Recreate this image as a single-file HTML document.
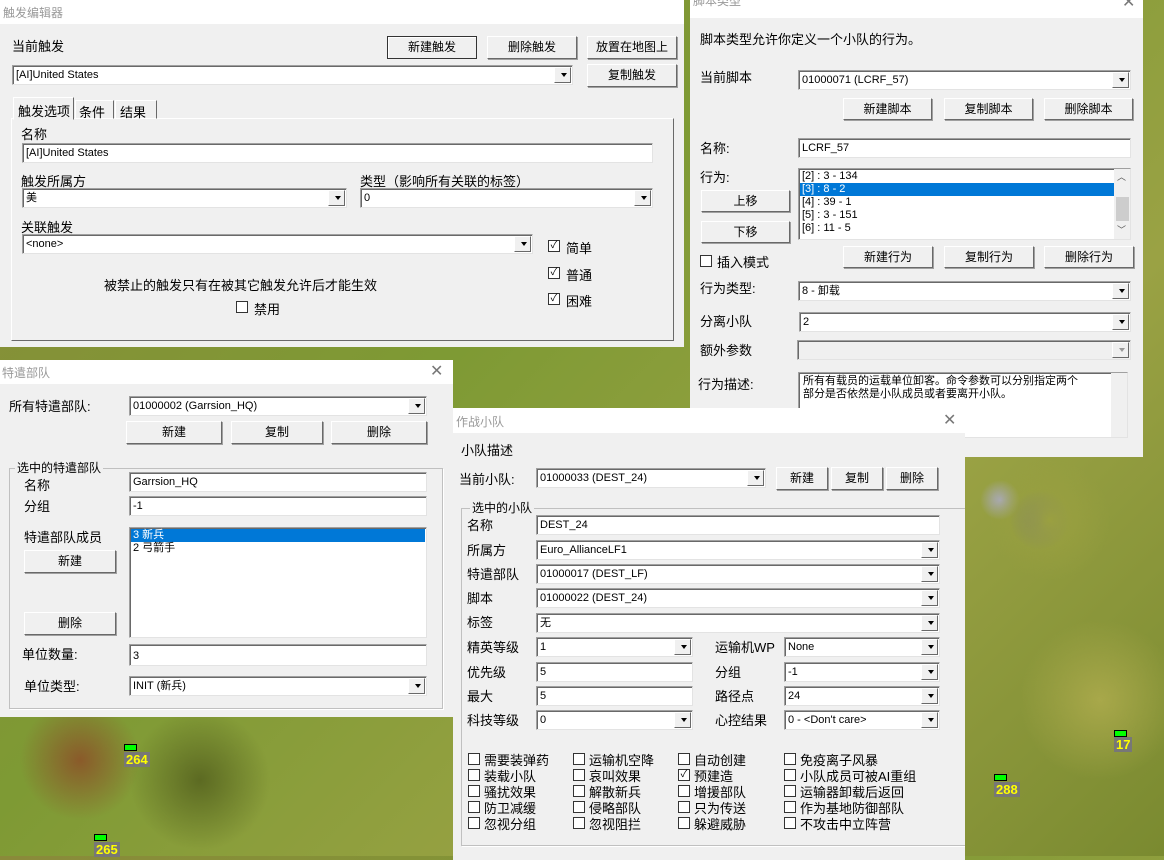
<!DOCTYPE html>
<html><head><meta charset="utf-8">
<style>
*{box-sizing:border-box;margin:0;padding:0}
body{width:1164px;height:856px;overflow:hidden;position:relative;font-family:"Liberation Sans","Noto Sans CJK SC",sans-serif;font-size:12px;color:#000;
background:radial-gradient(circle at 1050px 520px,#9aa040 0,transparent 60px),radial-gradient(circle at 200px 780px,#5c6a22 0,transparent 70px),radial-gradient(circle at 80px 760px,#8a5a2a 0,transparent 60px),radial-gradient(circle at 1100px 700px,#a8a84a 0,transparent 80px),radial-gradient(circle at 1040px 520px,#777 0,transparent 30px),radial-gradient(circle at 1000px 500px,#aab 0,transparent 20px),linear-gradient(135deg,#8a8a3a,#7e9a34 40%,#9aa244 70%,#7a8a30);}
.a{position:absolute;white-space:nowrap}
.win{position:absolute;background:#f0f0f0;overflow:hidden}
.tb{position:absolute;left:0;right:0;top:0;background:#fff}
.tt{color:#999;font-size:12px}
.x{position:absolute;color:#777;font-size:16px;font-weight:300}
.in{position:absolute;background:#fff;border:1px solid;border-color:#a0a0a0 #e3e3e3 #e3e3e3 #a0a0a0;box-shadow:inset 1px 1px 0 #696969;padding:2px 0 0 3px;font-size:11px;line-height:14px;overflow:hidden}
.cb{position:absolute;background:#fff;border:1px solid;border-color:#a0a0a0 #e3e3e3 #e3e3e3 #a0a0a0;box-shadow:inset 1px 1px 0 #696969;padding:2px 0 0 3px;font-size:11px;line-height:14px}
.cb::after{content:"";position:absolute;right:1px;top:1px;bottom:1px;width:15px;background:#f0f0f0;border:1px solid;border-color:#fff #696969 #696969 #fff}
.cb::before{content:"";position:absolute;right:5px;top:50%;margin-top:-2px;border:3.5px solid transparent;border-top:4px solid #000;border-bottom:0;z-index:2}
.dis{background:#f0f0f0}
.dis::before{border-top-color:#999}
.bt{position:absolute;background:#f0f0f0;border:1px solid;border-color:#fff #696969 #696969 #fff;box-shadow:1px 1px 0 #a0a0a0;text-align:center;font-size:12px}
.ck{position:absolute;width:12px;height:12px;background:#fff;border:1px solid #333;font-size:10px;line-height:10px;text-align:center}
.gb{position:absolute;border:1px solid #c0c0c0;box-shadow:1px 1px 0 #fff}
.gl{position:absolute;background:#f0f0f0;padding:0 2px}
.sel{background:#0078d7;color:#fff}
.win>.a:not(.tt){font-size:13px}
</style></head><body>

<!-- Trigger editor -->
<div class="win" style="left:0;top:0;width:684px;height:347px">
 <div class="tb" style="height:24px"></div>
 <div class="a tt" style="left:3px;top:4px">触发编辑器</div>
 <div class="a" style="left:12px;top:36px">当前触发</div>
 <div class="bt" style="left:387px;top:36px;width:90px;height:23px;line-height:21px;border-color:#333 #333 #333 #333;box-shadow:inset 1px 1px 0 #fff">新建触发</div>
 <div class="bt" style="left:487px;top:36px;width:90px;height:23px;line-height:21px">删除触发</div>
 <div class="bt" style="left:587px;top:36px;width:90px;height:23px;line-height:21px">放置在地图上</div>
 <div class="cb" style="left:12px;top:65px;width:561px;height:20px">[AI]United States</div>
 <div class="bt" style="left:587px;top:64px;width:90px;height:23px;line-height:21px">复制触发</div>
 <div class="a" style="left:11px;top:118px;width:663px;height:223px;border:1px solid;border-color:#fff #696969 #696969 #fff"></div>
 <div class="a" style="left:13px;top:97px;width:61px;height:23px;background:#f0f0f0;border:1px solid;border-color:#fff #696969 transparent #fff;padding:3px 0 0 4px">触发选项</div>
 <div class="a" style="left:75px;top:100px;width:39px;height:19px;border:1px solid;border-color:#fff #696969 transparent #fff;padding:1px 0 0 3px">条件</div>
 <div class="a" style="left:115px;top:100px;width:42px;height:19px;border:1px solid;border-color:#fff #696969 transparent #fff;padding:1px 0 0 4px">结果</div>
 <div class="a" style="left:21px;top:124px">名称</div>
 <div class="in" style="left:22px;top:143px;width:631px;height:20px">[AI]United States</div>
 <div class="a" style="left:21px;top:171px">触发所属方</div>
 <div class="a" style="left:360px;top:171px">类型（影响所有关联的标签）</div>
 <div class="cb" style="left:22px;top:188px;width:325px;height:20px">美</div>
 <div class="cb" style="left:360px;top:188px;width:293px;height:20px">0</div>
 <div class="a" style="left:21px;top:217px">关联触发</div>
 <div class="cb" style="left:22px;top:234px;width:511px;height:20px">&lt;none&gt;</div>
 <div class="ck" style="left:548px;top:240px">✓</div><div class="a" style="left:566px;top:238px">简单</div>
 <div class="ck" style="left:548px;top:267px">✓</div><div class="a" style="left:566px;top:265px">普通</div>
 <div class="ck" style="left:548px;top:293px">✓</div><div class="a" style="left:566px;top:291px">困难</div>
 <div class="a" style="left:104px;top:275px">被禁止的触发只有在被其它触发允许后才能生效</div>
 <div class="ck" style="left:236px;top:301px"></div><div class="a" style="left:254px;top:299px">禁用</div>
</div>

<!-- Script type window -->
<div class="win" style="left:690px;top:-6px;width:453px;height:463px">
 <div class="tb" style="height:24px"></div>
 <div class="a tt" style="left:3px;top:-2px">脚本类型</div>
 <div class="x" style="left:432px;top:-2px">✕</div>
 <div class="a" style="left:10px;top:35px">脚本类型允许你定义一个小队的行为。</div>
 <div class="a" style="left:10px;top:73px">当前脚本</div>
 <div class="cb" style="left:108px;top:76px;width:333px;height:20px">01000071 (LCRF_57)</div>
 <div class="bt" style="left:153px;top:104px;width:89px;height:22px;line-height:20px">新建脚本</div>
 <div class="bt" style="left:254px;top:104px;width:89px;height:22px;line-height:20px">复制脚本</div>
 <div class="bt" style="left:354px;top:104px;width:89px;height:22px;line-height:20px">删除脚本</div>
 <div class="a" style="left:10px;top:144px">名称:</div>
 <div class="in" style="left:108px;top:144px;width:333px;height:20px">LCRF_57</div>
 <div class="a" style="left:10px;top:173px">行为:</div>
 <div class="in" style="left:108px;top:174px;width:333px;height:72px;padding:1px 0 0 1px;line-height:13px">
  <div style="padding-left:2px">[2] : 3 - 134</div>
  <div class="sel" style="width:314px;padding-left:2px">[3] : 8 - 2</div>
  <div style="padding-left:2px">[4] : 39 - 1</div>
  <div style="padding-left:2px">[5] : 3 - 151</div>
  <div style="padding-left:2px">[6] : 11 - 5</div>
  <div style="position:absolute;right:0;top:0;bottom:0;width:16px;background:#f0f0f0"><div style="position:absolute;top:28px;left:2px;width:13px;height:24px;background:#cdcdcd"></div><div style="position:absolute;top:2px;left:3px;color:#555;font-size:9px">︿</div><div style="position:absolute;bottom:2px;left:3px;color:#555;font-size:9px">﹀</div></div>
 </div>
 <div class="bt" style="left:11px;top:196px;width:89px;height:22px;line-height:20px">上移</div>
 <div class="bt" style="left:11px;top:227px;width:89px;height:22px;line-height:20px">下移</div>
 <div class="ck" style="left:10px;top:261px"></div><div class="a" style="left:27px;top:258px">插入模式</div>
 <div class="bt" style="left:153px;top:252px;width:90px;height:22px;line-height:20px">新建行为</div>
 <div class="bt" style="left:254px;top:252px;width:90px;height:22px;line-height:20px">复制行为</div>
 <div class="bt" style="left:354px;top:252px;width:90px;height:22px;line-height:20px">删除行为</div>
 <div class="a" style="left:10px;top:284px">行为类型:</div>
 <div class="cb" style="left:108px;top:287px;width:333px;height:20px">8 - 卸载</div>
 <div class="a" style="left:10px;top:317px">分离小队</div>
 <div class="cb" style="left:109px;top:318px;width:332px;height:20px">2</div>
 <div class="a" style="left:10px;top:346px">额外参数</div>
 <div class="cb dis" style="left:107px;top:346px;width:334px;height:20px"></div>
 <div class="a" style="left:8px;top:380px">行为描述:</div>
 <div class="in" style="left:108px;top:378px;width:330px;height:66px;line-height:13px;padding:2px 0 0 4px;white-space:normal">所有有载员的运载单位卸客。命令参数可以分别指定两个<br>部分是否依然是小队成员或者要离开小队。
  <div style="position:absolute;right:0;top:0;bottom:0;width:16px;background:#f0f0f0"></div></div>
</div>

<!-- Taskforce window -->
<div class="win" style="left:0;top:360px;width:453px;height:357px">
 <div class="tb" style="height:24px"></div>
 <div class="a tt" style="left:2px;top:4px">特遣部队</div>
 <div class="x" style="left:430px;top:1px">✕</div>
 <div class="a" style="left:9px;top:36px">所有特遣部队:</div>
 <div class="cb" style="left:129px;top:36px;width:298px;height:20px">01000002 (Garrsion_HQ)</div>
 <div class="bt" style="left:126px;top:61px;width:96px;height:23px;line-height:21px">新建</div>
 <div class="bt" style="left:231px;top:61px;width:92px;height:23px;line-height:21px">复制</div>
 <div class="bt" style="left:331px;top:61px;width:96px;height:23px;line-height:21px">删除</div>
 <div class="gb" style="left:9px;top:108px;width:434px;height:241px"></div>
 <div class="gl" style="left:15px;top:99px">选中的特遣部队</div>
 <div class="a" style="left:24px;top:115px">名称</div>
 <div class="in" style="left:129px;top:112px;width:298px;height:20px">Garrsion_HQ</div>
 <div class="a" style="left:24px;top:136px">分组</div>
 <div class="in" style="left:129px;top:136px;width:298px;height:20px">-1</div>
 <div class="a" style="left:24px;top:167px">特遣部队成员</div>
 <div class="in" style="left:129px;top:167px;width:298px;height:111px;padding:1px;line-height:13px">
  <div class="sel" style="padding-left:2px">3 新兵</div><div style="padding-left:2px">2 弓箭手</div></div>
 <div class="bt" style="left:24px;top:190px;width:92px;height:23px;line-height:21px">新建</div>
 <div class="bt" style="left:24px;top:252px;width:92px;height:23px;line-height:21px">删除</div>
 <div class="a" style="left:22px;top:284px">单位数量:</div>
 <div class="in" style="left:129px;top:284px;width:298px;height:22px;padding-top:4px">3</div>
 <div class="a" style="left:24px;top:316px">单位类型:</div>
 <div class="cb" style="left:129px;top:316px;width:298px;height:20px">INIT (新兵)</div>
</div>

<!-- Team window -->
<div class="win" style="left:453px;top:408px;width:512px;height:452px">
 <div class="tb" style="height:25px"></div>
 <div class="a tt" style="left:3px;top:5px">作战小队</div>
 <div class="x" style="left:490px;top:2px">✕</div>
 <div class="a" style="left:8px;top:32px">小队描述</div>
 <div class="a" style="left:6px;top:61px">当前小队:</div>
 <div class="cb" style="left:83px;top:60px;width:230px;height:20px">01000033 (DEST_24)</div>
 <div class="bt" style="left:323px;top:59px;width:52px;height:23px;line-height:21px">新建</div>
 <div class="bt" style="left:378px;top:59px;width:52px;height:23px;line-height:21px">复制</div>
 <div class="bt" style="left:433px;top:59px;width:52px;height:23px;line-height:21px">删除</div>
 <div class="gb" style="left:8px;top:100px;width:520px;height:338px"></div>
 <div class="gl" style="left:17px;top:91px">选中的小队</div>
 <div class="a" style="left:14px;top:107px">名称</div>
 <div class="in" style="left:83px;top:107px;width:404px;height:20px">DEST_24</div>
 <div class="a" style="left:14px;top:132px">所属方</div>
 <div class="cb" style="left:83px;top:132px;width:404px;height:20px">Euro_AllianceLF1</div>
 <div class="a" style="left:14px;top:156px">特遣部队</div>
 <div class="cb" style="left:83px;top:156px;width:404px;height:20px">01000017 (DEST_LF)</div>
 <div class="a" style="left:14px;top:180px">脚本</div>
 <div class="cb" style="left:83px;top:180px;width:404px;height:20px">01000022 (DEST_24)</div>
 <div class="a" style="left:14px;top:204px">标签</div>
 <div class="cb" style="left:83px;top:205px;width:404px;height:20px">无</div>
 <div class="a" style="left:14px;top:229px">精英等级</div>
 <div class="cb" style="left:83px;top:229px;width:157px;height:20px">1</div>
 <div class="a" style="left:262px;top:229px">运输机WP</div>
 <div class="cb" style="left:331px;top:229px;width:156px;height:20px">None</div>
 <div class="a" style="left:14px;top:254px">优先级</div>
 <div class="in" style="left:83px;top:254px;width:157px;height:20px">5</div>
 <div class="a" style="left:262px;top:254px">分组</div>
 <div class="cb" style="left:331px;top:254px;width:156px;height:20px">-1</div>
 <div class="a" style="left:14px;top:278px">最大</div>
 <div class="in" style="left:83px;top:278px;width:157px;height:20px">5</div>
 <div class="a" style="left:262px;top:278px">路径点</div>
 <div class="cb" style="left:331px;top:278px;width:156px;height:20px">24</div>
 <div class="a" style="left:14px;top:302px">科技等级</div>
 <div class="cb" style="left:83px;top:302px;width:157px;height:20px">0</div>
 <div class="a" style="left:262px;top:302px">心控结果</div>
 <div class="cb" style="left:331px;top:302px;width:156px;height:20px">0 - &lt;Don't care&gt;</div>

 <div class="ck" style="left:15px;top:345px"></div><div class="a" style="left:31px;top:342px">需要装弹药</div>
 <div class="ck" style="left:15px;top:361px"></div><div class="a" style="left:31px;top:358px">装载小队</div>
 <div class="ck" style="left:15px;top:377px"></div><div class="a" style="left:31px;top:374px">骚扰效果</div>
 <div class="ck" style="left:15px;top:393px"></div><div class="a" style="left:31px;top:390px">防卫减缓</div>
 <div class="ck" style="left:15px;top:409px"></div><div class="a" style="left:31px;top:406px">忽视分组</div>

 <div class="ck" style="left:120px;top:345px"></div><div class="a" style="left:136px;top:342px">运输机空降</div>
 <div class="ck" style="left:120px;top:361px"></div><div class="a" style="left:136px;top:358px">哀叫效果</div>
 <div class="ck" style="left:120px;top:377px"></div><div class="a" style="left:136px;top:374px">解散新兵</div>
 <div class="ck" style="left:120px;top:393px"></div><div class="a" style="left:136px;top:390px">侵略部队</div>
 <div class="ck" style="left:120px;top:409px"></div><div class="a" style="left:136px;top:406px">忽视阻拦</div>

 <div class="ck" style="left:225px;top:345px"></div><div class="a" style="left:241px;top:342px">自动创建</div>
 <div class="ck" style="left:225px;top:361px">✓</div><div class="a" style="left:241px;top:358px">预建造</div>
 <div class="ck" style="left:225px;top:377px"></div><div class="a" style="left:241px;top:374px">增援部队</div>
 <div class="ck" style="left:225px;top:393px"></div><div class="a" style="left:241px;top:390px">只为传送</div>
 <div class="ck" style="left:225px;top:409px"></div><div class="a" style="left:241px;top:406px">躲避威胁</div>

 <div class="ck" style="left:331px;top:345px"></div><div class="a" style="left:347px;top:342px">免疫离子风暴</div>
 <div class="ck" style="left:331px;top:361px"></div><div class="a" style="left:347px;top:358px">小队成员可被AI重组</div>
 <div class="ck" style="left:331px;top:377px"></div><div class="a" style="left:347px;top:374px">运输器卸载后返回</div>
 <div class="ck" style="left:331px;top:393px"></div><div class="a" style="left:347px;top:390px">作为基地防御部队</div>
 <div class="ck" style="left:331px;top:409px"></div><div class="a" style="left:347px;top:406px">不攻击中立阵营</div>
</div>

<!-- map markers -->
<div class="a" style="left:124px;top:744px;width:13px;height:7px;background:#0f0;border:1px solid #000"></div>
<div class="a" style="left:124px;top:752px;background:#777;color:#ff0;font-weight:bold;font-size:13px;padding:0 2px">264</div>
<div class="a" style="left:94px;top:834px;width:13px;height:7px;background:#0f0;border:1px solid #000"></div>
<div class="a" style="left:94px;top:842px;background:#777;color:#ff0;font-weight:bold;font-size:13px;padding:0 2px">265</div>
<div class="a" style="left:994px;top:774px;width:13px;height:7px;background:#0f0;border:1px solid #000"></div>
<div class="a" style="left:994px;top:782px;background:#777;color:#ff0;font-weight:bold;font-size:13px;padding:0 2px">288</div>
<div class="a" style="left:1114px;top:730px;width:13px;height:7px;background:#0f0;border:1px solid #000"></div>
<div class="a" style="left:1114px;top:737px;background:#777;color:#ff0;font-weight:bold;font-size:13px;padding:0 2px">17</div>
</body></html>
